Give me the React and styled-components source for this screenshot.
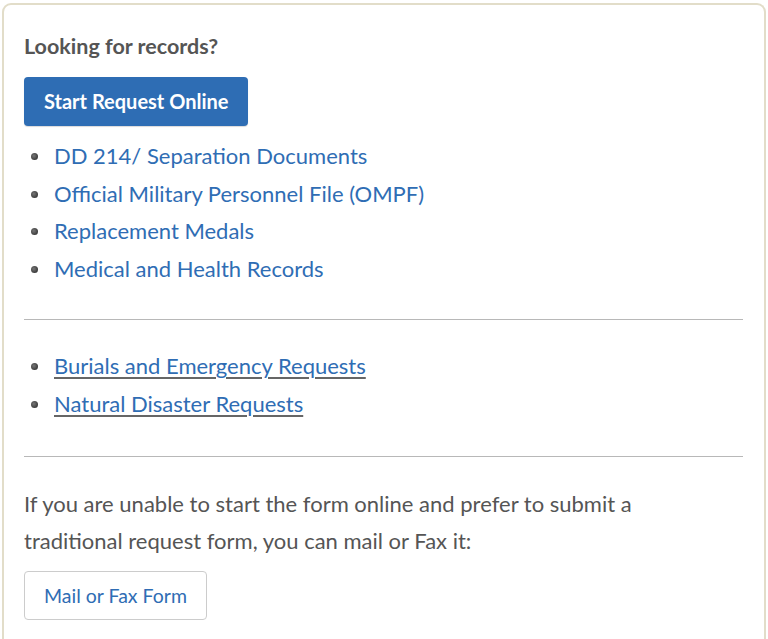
import React from "react";
import styled, { createGlobalStyle } from "styled-components";

const GlobalStyle = createGlobalStyle`
  body {
    margin: 0;
    background: #fff;
    font-family: "Lato", "Liberation Sans", sans-serif;
  }
`;

const Card = styled.section`
  box-sizing: border-box;
  margin: 3px 0 0 2px;
  width: 764px;
  min-height: 660px;
  border: 2px solid #e2ddc9;
  border-bottom: none;
  border-radius: 9px 9px 0 0;
  padding: 26px 21px 0 20px;
`;

const Heading = styled.h2`
  margin: 0 0 16px;
  font-size: 21.5px;
  line-height: 30px;
  font-weight: 700;
  color: #555;
`;

const PrimaryButton = styled.a`
  display: inline-block;
  box-sizing: border-box;
  height: 49px;
  padding: 0 20px;
  line-height: 49px;
  background: #2e6db4;
  color: #fff;
  font-size: 20px;
  font-weight: 700;
  border-radius: 4px;
  text-decoration: none;
  box-shadow: 0 1px 1px rgba(0, 0, 0, 0.15);
`;

const LinkList = styled.ul`
  margin: ${(p) => p.$top}px 0 0;
  padding: 0;
  list-style: none;
`;

const Item = styled.li`
  position: relative;
  padding-left: 30px;
  font-size: 22px;
  line-height: 37.5px;

  &::before {
    content: "";
    position: absolute;
    left: 7px;
    top: 16px;
    width: 7px;
    height: 7px;
    border-radius: 50%;
    background: radial-gradient(circle at 40% 40%, #777, #222);
  }
`;

const Link = styled.a`
  color: #2f6db4;
  text-decoration: ${(p) => (p.$underline ? "underline" : "none")};
  text-decoration-color: #666;
  text-underline-offset: 3px;
  text-decoration-thickness: 1.5px;
`;

const Divider = styled.hr`
  margin: ${(p) => p.$top}px 0 0;
  border: none;
  border-top: 1.5px solid #b8b8b8;
`;

const Text = styled.p`
  margin: 28px 0 0;
  max-width: 650px;
  font-size: 22px;
  line-height: 37px;
  color: #555;
`;

const OutlineButton = styled.a`
  display: inline-block;
  box-sizing: border-box;
  margin-top: 12px;
  height: 49px;
  padding: 0 19px;
  line-height: 47px;
  border: 1px solid #ccc;
  border-radius: 4px;
  background: #fff;
  color: #2f6db4;
  font-size: 19.5px;
  text-decoration: none;
`;

const records = [
  "DD 214/ Separation Documents",
  "Official Military Personnel File (OMPF)",
  "Replacement Medals",
  "Medical and Health Records",
];

const urgent = ["Burials and Emergency Requests", "Natural Disaster Requests"];

export default function App() {
  return (
    <>
      <GlobalStyle />
      <Card>
        <Heading>Looking for records?</Heading>
        <PrimaryButton href="#">Start Request Online</PrimaryButton>
        <LinkList $top={11}>
          {records.map((r) => (
            <Item key={r}>
              <Link href="#">{r}</Link>
            </Item>
          ))}
        </LinkList>
        <Divider $top={32} />
        <LinkList $top={27}>
          {urgent.map((r) => (
            <Item key={r}>
              <Link href="#" $underline>
                {r}
              </Link>
            </Item>
          ))}
        </LinkList>
        <Divider $top={34} />
        <Text>
          If you are unable to start the form online and prefer to submit a
          traditional request form, you can mail or Fax it:
        </Text>
        <OutlineButton href="#">Mail or Fax Form</OutlineButton>
      </Card>
    </>
  );
}
